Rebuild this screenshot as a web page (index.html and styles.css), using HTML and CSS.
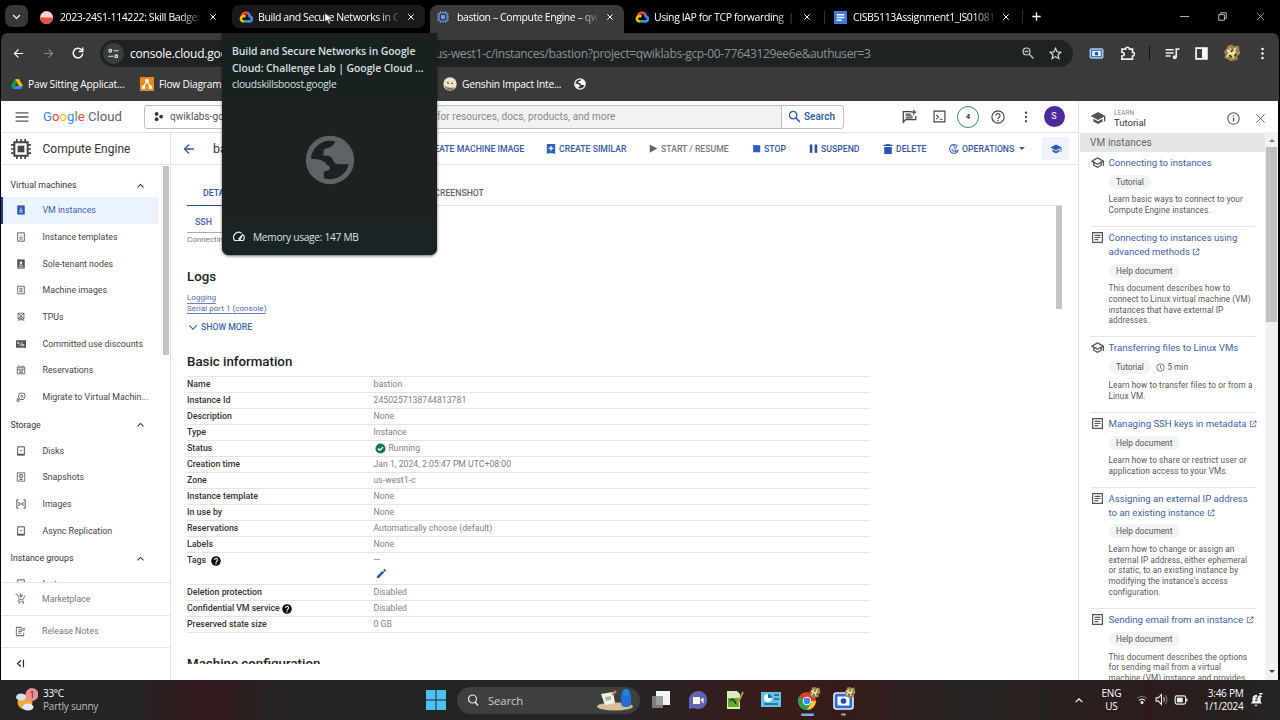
FILE: index.html
```html
<!DOCTYPE html>
<html lang="en">
<head>
<meta charset="utf-8">
<title>bastion – Compute Engine</title>
<link rel="stylesheet" href="styles.css">
</head>
<body>
<svg class="defs" aria-hidden="true">
  <symbol id="x" viewBox="0 0 24 24"><path d="M4 4l16 16M20 4L4 20" fill="none" stroke="currentColor" stroke-width="3"/></symbol>
  <symbol id="xthin" viewBox="0 0 24 24"><path d="M3 3l18 18M21 3L3 21" fill="none" stroke="currentColor" stroke-width="2"/></symbol>
  <symbol id="gcloud" viewBox="0 0 24 24"><g fill="none" stroke-width="4.6"><path d="M5 10a7 7 0 0 1 12-3" stroke="#ea4335"/><path d="M16 6a7 7 0 0 1 2.500 5a4.300 4.300 0 0 1 0 8.500H12" stroke="#4285f4"/><path d="M13 19.500H7" stroke="#34a853"/><path d="M8 19.500a4.600 4.600 0 1 1 3-8" stroke="#fbbc04"/></g></symbol>
  <symbol id="chip" viewBox="0 0 24 24"><path d="M4 4h16v16H4z" fill="none" stroke="currentColor" stroke-width="2.400"/><path d="M8 8h8v8H8z" fill="currentColor"/><path d="M7 0v4M12 0v4M17 0v4M7 20v4M12 20v4M17 20v4M0 7h4M0 12h4M0 17h4M20 7h4M20 12h4M20 17h4" stroke="currentColor" stroke-width="2"/></symbol>
  <symbol id="up" viewBox="0 0 24 24"><path d="M4 17l8-8 8 8" fill="none" stroke="currentColor" stroke-width="2.800"/></symbol>
  <symbol id="down" viewBox="0 0 24 24"><path d="M3 8l9 9 9-9" fill="none" stroke="currentColor" stroke-width="3"/></symbol>
  <symbol id="back" viewBox="0 0 24 24"><path d="M22 12H3M12 3l-9 9 9 9" fill="none" stroke="currentColor" stroke-width="2.600"/></symbol>
  <symbol id="fwd" viewBox="0 0 24 24"><path d="M2 12h19M12 3l9 9-9 9" fill="none" stroke="currentColor" stroke-width="2.400"/></symbol>
  <symbol id="globe" viewBox="0 0 24 24"><circle cx="12" cy="12" r="10.400" fill="none" stroke="currentColor" stroke-width="2.400"/><path d="M15 1.800c-1 3-2 4.200-4.500 4.500C8.500 6.500 9 8 8.800 9.800c1.500.4 3.400-.2 4.200 1.400.6 1.600 1.300 2.800 3.200 2.800H21.500l1-3L21 6l-3-3zM2 11.500c3 0 6-.2 8 2 .5 1.200 2 1 2 2.500 0 1.600-3 .8-3 2.200V22l-3-1-3-4z" fill="currentColor"/></symbol>
  <symbol id="doc" viewBox="0 0 24 24"><path d="M3 3h18v18H3zM6.500 8h11M6.500 12h11M6.500 16h7" fill="none" stroke="currentColor" stroke-width="2.200"/></symbol>
  <symbol id="cap" viewBox="0 0 24 24"><path d="M12 3.500L23 9.500v9M12 3.500L1.500 9.500 12 15.500l10.500-6M5 12v5l7 4 7-4v-5" fill="none" stroke="currentColor" stroke-width="2.300"/></symbol>
  <symbol id="capfill" viewBox="0 0 24 24"><path d="M5 13.200v4L12 21l7-3.800v-4L12 17zM12 3L1 9l11 6 9-4.900V17h2V9z" fill="currentColor"/></symbol>
  <symbol id="ext" viewBox="0 0 24 24"><path d="M10 4H4v16h16v-6M14 3h7v7M21 3L10 14" fill="none" stroke="currentColor" stroke-width="2.400"/></symbol>
  <symbol id="vm" viewBox="0 0 24 24"><path d="M4 2h16v20H4z" fill="none" stroke="currentColor" stroke-width="2.200"/><path d="M9 8h2M13 8h2M8 13h8M8 17h8" stroke="currentColor" stroke-width="2"/></symbol>
  <symbol id="tenant" viewBox="0 0 24 24"><path d="M3 1h18v22H3z" fill="currentColor"/><circle cx="12" cy="9" r="3" fill="#fff"/><path d="M7 16q5-5 10 0M6 19.500h12" fill="none" stroke="#fff" stroke-width="1.800"/></symbol>
  <symbol id="vmfill" viewBox="0 0 24 24"><path d="M3 1h18v22H3z" fill="currentColor"/><path d="M8 17h8M8 12.500h8M12 6v5" stroke="#fff" stroke-width="2"/></symbol>
  <symbol id="disk" viewBox="0 0 24 24"><path d="M4 2h16v20H4z" fill="none" stroke="currentColor" stroke-width="2.400"/><circle cx="12" cy="11" r="2" fill="currentColor"/><path d="M5 20h14" stroke="currentColor" stroke-width="3"/></symbol>
  <symbol id="snap" viewBox="0 0 24 24"><path d="M3 2h18v20H3z" fill="none" stroke="currentColor" stroke-width="2"/><circle cx="12" cy="10" r="4.500" fill="none" stroke="currentColor" stroke-width="2"/><path d="M8 18h8M12 7v6" stroke="currentColor" stroke-width="2"/></symbol>
  <symbol id="machine" viewBox="0 0 24 24"><path d="M4 3h16v18H4z" fill="none" stroke="currentColor" stroke-width="2"/><path d="M8 8h8M8 12h8M8 16h8" stroke="currentColor" stroke-width="2"/></symbol>
  <symbol id="tpu" viewBox="0 0 24 24"><path d="M5 3h14v14H5zM5 3l14 14M19 3L5 17M9 17l-5 5M15 17l5 5M12 9v12" fill="none" stroke="currentColor" stroke-width="2"/></symbol>
  <symbol id="percent" viewBox="0 0 24 24"><path d="M0 3h24v18H0z" fill="currentColor"/><path d="M8 17l7-10M4 8h3v3H4zM14 13h5v3h-5z" fill="none" stroke="#fff" stroke-width="1.600"/></symbol>
  <symbol id="cal" viewBox="0 0 24 24"><path d="M3 5h18v16H3zM3 10h18M7 1v5M17 1v5M12 3v4M7 14h10M7 17.500h10" fill="none" stroke="currentColor" stroke-width="2"/></symbol>
  <symbol id="migrate" viewBox="0 0 24 24"><path d="M8 3h12l2 7-4 8H9l-3-6zM2 22l6-6M3 15v7h7" fill="none" stroke="currentColor" stroke-width="2"/><circle cx="14" cy="10.500" r="2.500" fill="none" stroke="currentColor" stroke-width="2"/></symbol>
  <symbol id="images" viewBox="0 0 24 24"><path d="M6 2H2v20h4M18 2h4v20h-4M6 12h12M7 7v3M17 7v3M7 14v3M17 14v3" fill="none" stroke="currentColor" stroke-width="2.400"/></symbol>
  <symbol id="cart" viewBox="0 0 24 24"><path d="M1 3h4l4 11h9l4-9M9 14l-2 4h13M12 1v9M8 6h9M15 3v7" fill="none" stroke="currentColor" stroke-width="2"/><circle cx="9" cy="21.500" r="2" fill="currentColor"/><circle cx="18" cy="21.500" r="2" fill="currentColor"/></symbol>
  <symbol id="notes" viewBox="0 0 24 24"><path d="M14 3H3v18h16v-6M7 8h6M7 12h8M7 16h6M15 3v6h6M18 4l4 3" fill="none" stroke="currentColor" stroke-width="2.200"/></symbol>
  <symbol id="help" viewBox="0 0 24 24"><circle cx="12" cy="12" r="11.500" fill="#111"/><path d="M8.300 9.500a3.700 3.700 0 1 1 5.700 3c-1.500 1-2 1.500-2 3M12 17v3" fill="none" stroke="#fff" stroke-width="2.500"/></symbol>
  <symbol id="search" viewBox="0 0 24 24"><circle cx="9.500" cy="9.500" r="6.800" fill="none" stroke="currentColor" stroke-width="2.400"/><path d="M14.500 14.500l7.500 7.500" stroke="currentColor" stroke-width="2.800"/></symbol>
  <symbol id="dots" viewBox="0 0 24 24"><g fill="currentColor"><circle cx="12" cy="3.500" r="2.300"/><circle cx="12" cy="12" r="2.300"/><circle cx="12" cy="20.500" r="2.300"/></g></symbol>
  <symbol id="bloom" viewBox="0 0 24 24"><path d="M12 1l4 2 5-1 1 6 1 5-4 3 1 5-6 1-4 1-4-3-4-1 1-5-2-4 4-3 1-5z" fill="#9b8447"/><path d="M8 4l4 4 6-4-2 6 5 3-7 1 1 6-5-4-6 2 3-6-3-5 5 1z" fill="#eee0aa"/><path d="M10 10l4-2M8 15l4 2M16 16l2-4" stroke="#3f3415" stroke-width="2"/></symbol>
</svg>

<header class="tabs">
  <span class="tablist"><svg class="i9"><use href="#down"/></svg></span>
  <div class="tab t1">
    <svg class="i13" viewBox="0 0 24 24"><circle cx="12" cy="12" r="12" fill="#f5d5cc"/><path d="M0 12a12 12 0 0 0 24 0z" fill="#e2523e"/></svg>
    <span class="tt">2023-24S1-114222: Skill Badge:</span><svg class="i8"><use href="#x"/></svg>
  </div>
  <div class="tab t2"><svg class="i14"><use href="#gcloud"/></svg><span class="tt">Build and Secure Networks in G</span><svg class="i8"><use href="#x"/></svg></div>
  <div class="tab t3"><svg class="i12 blue"><use href="#chip"/></svg><span class="tt">bastion – Compute Engine – qwi</span><svg class="i8"><use href="#x"/></svg></div>
  <div class="tab t4"><svg class="i14"><use href="#gcloud"/></svg><span class="tt">Using IAP for TCP forwarding &nbsp;|</span><svg class="i8"><use href="#x"/></svg></div>
  <div class="tab t5"><svg class="i13" viewBox="0 0 24 24"><path d="M0 0h24v24H0z" fill="#3e78dc"/><path d="M5 7h14M5 12h14M5 17h9" stroke="#fff" stroke-width="2.500"/></svg><span class="tt">CISB5113Assignment1_IS01081</span><svg class="i8"><use href="#x"/></svg></div>
  <div class="newtab"><svg class="i9" viewBox="0 0 24 24"><path d="M12 1v22M1 12h22" stroke="#fff" stroke-width="3.500"/></svg></div>
  <div class="winctl">
    <svg class="i9" viewBox="0 0 24 24"><path d="M0 12h24" stroke="#bbb" stroke-width="2.500"/></svg>
    <svg class="i9" viewBox="0 0 24 24"><path d="M2 7h15v15H2zM7 7V2h15v15h-5" fill="none" stroke="#ccc" stroke-width="2.500"/></svg>
    <svg class="i9"><use href="#xthin"/></svg>
  </div>
</header>

<section class="chrome">
  <div class="navrow">
    <svg class="i11"><use href="#back"/></svg>
    <svg class="i11 dim"><use href="#fwd"/></svg>
    <svg class="i12" viewBox="0 0 24 24"><path d="M20 7a9.500 9.500 0 1 0 1.500 6M21.500 1v8h-8" fill="none" stroke="currentColor" stroke-width="3"/></svg>
    <div class="url">
      <span class="site"><svg class="i11" viewBox="0 0 24 24"><path d="M12 6h11M1 18h11" stroke="#eee" stroke-width="2.600"/><circle cx="5" cy="6" r="3" fill="none" stroke="#eee" stroke-width="2.400"/><circle cx="18" cy="18" r="3" fill="none" stroke="#eee" stroke-width="2.400"/></svg></span>
      <span class="u1">console.cloud.goo</span>
      <span class="u2">us-west1-c/instances/bastion?project=qwiklabs-gcp-00-77643129ee6e&amp;authuser=3</span>
      <svg class="i12" viewBox="0 0 24 24"><circle cx="9" cy="9" r="7" fill="none" stroke="#ccc" stroke-width="2.400"/><path d="M5.500 9h7M14 14l9 9" stroke="#ccc" stroke-width="2.600"/></svg>
      <svg class="i13" viewBox="0 0 24 24"><path d="M12 2.500l3 6.500 7 .7-5.300 4.700 1.600 7L12 17.700l-6.300 3.700 1.600-7L2 9.700 9 9z" fill="none" stroke="#ddd" stroke-width="2.200"/></svg>
    </div>
    <div class="exts">
      <svg viewBox="0 0 28 24" width="15" height="13"><rect x="1" y="2" width="26" height="20" rx="4" fill="#a9cdfa"/><rect x="5" y="6" width="18" height="12" fill="#e9f2ff" stroke="#2d63ad" stroke-width="2"/><circle cx="14" cy="12" r="3.500" fill="#24559c"/></svg>
      <svg class="i15" viewBox="0 0 24 24"><path d="M3 5h6c0-4 6-4 6 0h5v5c4 0 4 6 0 6v5H3v-5c5 0 5-6 0-6z" fill="none" stroke="#eee" stroke-width="2.600"/></svg>
      <i class="vr"></i>
      <svg class="i15" viewBox="0 0 24 24"><path d="M1 6h13M1 11h13M1 16h8" stroke="#eee" stroke-width="2.400"/><path d="M18 18V5h5" fill="none" stroke="#eee" stroke-width="2.600"/><circle cx="15.500" cy="18" r="3.300" fill="#eee"/></svg>
      <svg class="i13" viewBox="0 0 24 24"><path d="M2 2h20v20H2z" fill="none" stroke="#fff" stroke-width="3"/><path d="M13 2h9v20h-9z" fill="#fff"/></svg>
      <svg class="i18"><use href="#bloom"/></svg>
      <svg class="i13"><use href="#dots"/></svg>
    </div>
  </div>
  <div class="bookmarks">
    <svg class="i12" viewBox="0 0 24 24"><path d="M8 2h8l8 14h-8z" fill="#fbbc04"/><path d="M8 2l4 7-8 13-4-6z" fill="#0f9d58"/><path d="M8 16h16l-4 6H4z" fill="#4285f4"/></svg>
    <span class="b1">Paw Sitting Applicat...</span>
    <svg class="i14" viewBox="0 0 24 24"><path d="M0 0h24v24H0z" fill="#e6891d"/><path d="M9 4h6v5H9zM3 15h6v5H3zM15 15h6v5h-6z" fill="#fff"/><path d="M12 8l-6 8M12 8l6 8" stroke="#fff" stroke-width="2"/></svg>
    <span class="b2">Flow Diagram_</span>
    <svg class="i14" viewBox="0 0 24 24"><circle cx="12" cy="12" r="11.500" fill="#eee2d1"/><path d="M2 14q8 7 18 3-2 6-8 6T2 14" fill="#92755b"/><path d="M7 9l3 2M14 11h3" stroke="#5b4030" stroke-width="2"/></svg>
    <span class="b3">Genshin Impact Inte...</span>
    <svg class="i12"><use href="#globe"/></svg>
  </div>
</section>

<main class="page">
  <div class="console">
    <div class="gbar">
      <svg class="i14" viewBox="0 0 24 24"><path d="M1 5h22M1 12h22M1 19h22" stroke="#555" stroke-width="2.400"/></svg>
      <span class="logo"><b class="gb">G</b><b class="gr">o</b><b class="gy">o</b><b class="gb">g</b><b class="gg">l</b><b class="gr">e</b> Cloud</span>
      <div class="searchbox">
        <div class="proj"><svg class="i9" viewBox="0 0 24 24"><g fill="#333"><circle cx="7" cy="5" r="5"/><circle cx="7" cy="19" r="5"/><circle cx="19" cy="12" r="5"/></g></svg>qwiklabs-gcp</div>
        <div class="query">for resources, docs, products, and more</div>
        <div class="sbtn"><svg class="i13"><use href="#search"/></svg>Search</div>
      </div>
      <div class="gicons">
        <svg class="i15" viewBox="0 0 24 24"><path d="M15 4H2v17l4-4h16v-6M6 8h8M6 11h11M6 14h11M19 1v8M15 5h8" fill="none" stroke="#444" stroke-width="2"/></svg>
        <svg class="i13" viewBox="0 0 24 24"><path d="M2 2h20v20H2z" fill="none" stroke="#444" stroke-width="2.200"/><path d="M6 9l4 4-4 4M12 17h6" fill="none" stroke="#444" stroke-width="2"/></svg>
        <span class="four">4</span>
        <svg class="i14" viewBox="0 0 24 24"><circle cx="12" cy="12" r="10.500" fill="none" stroke="#444" stroke-width="2"/><path d="M8.500 9.500a3.500 3.500 0 1 1 5.500 3c-1.500 1-2 1.500-2 3M12 17v2.500" fill="none" stroke="#444" stroke-width="2"/></svg>
        <svg class="i12 grey"><use href="#dots"/></svg>
        <span class="ava">S</span>
      </div>
    </div>
    <div class="body">
      <aside class="side">
        <div class="prod"><svg class="i20"><use href="#chip"/></svg><span>Compute Engine</span></div>
        <div class="navwrap">
          <nav>
            <div class="grp first"><span>Virtual machines</span><svg class="i9"><use href="#up"/></svg></div>
            <div class="it on"><svg class="i10"><use href="#vmfill"/></svg>VM instances</div>
            <div class="it"><svg class="i10"><use href="#vm"/></svg>Instance templates</div>
            <div class="it"><svg class="i10"><use href="#tenant"/></svg>Sole-tenant nodes</div>
            <div class="it"><svg class="i10"><use href="#machine"/></svg>Machine images</div>
            <div class="it"><svg class="i10"><use href="#tpu"/></svg>TPUs</div>
            <div class="it"><svg class="i10"><use href="#percent"/></svg>Committed use discounts</div>
            <div class="it"><svg class="i10"><use href="#cal"/></svg>Reservations</div>
            <div class="it"><svg class="i10"><use href="#migrate"/></svg>Migrate to Virtual Machin...</div>
            <div class="grp"><span>Storage</span><svg class="i9"><use href="#up"/></svg></div>
            <div class="it"><svg class="i10"><use href="#disk"/></svg>Disks</div>
            <div class="it"><svg class="i10"><use href="#snap"/></svg>Snapshots</div>
            <div class="it"><svg class="i10"><use href="#images"/></svg>Images</div>
            <div class="it"><svg class="i10"><use href="#disk"/></svg>Async Replication</div>
            <div class="grp"><span>Instance groups</span><svg class="i9"><use href="#up"/></svg></div>
            <div class="it"><svg class="i10"><use href="#vm"/></svg>Instance groups</div>
          </nav>
          <i class="thumb"></i>
        </div>
        <div class="foot"><svg class="i11"><use href="#cart"/></svg>Marketplace</div>
        <div class="foot"><svg class="i11"><use href="#notes"/></svg>Release Notes</div>
        <div class="foot last"><svg class="i9" viewBox="0 0 24 24"><path d="M13 4l-9 8 9 8M20 2v20" fill="none" stroke="#222" stroke-width="3"/></svg></div>
      </aside>
      <section class="content">
        <div class="actions">
          <svg class="i12 a0"><use href="#back"/></svg>
          <span class="ttl">bastion</span>
          <span class="act a1">CREATE MACHINE IMAGE</span>
          <span class="act"><svg class="i10" viewBox="0 0 24 24"><path d="M2 0h20v24l-4-2H6l-4 2z" fill="#2b5fc0"/><path d="M12 5v11M6.500 10.500h11" stroke="#fff" stroke-width="3"/></svg>CREATE SIMILAR</span>
          <span class="act off"><svg class="i9" viewBox="0 0 24 24"><path d="M2 1l20 11L2 23z" fill="#666"/></svg>START / RESUME</span>
          <span class="act"><svg class="i9" viewBox="0 0 24 24"><path d="M3 3h19v19H3z" fill="#2b5fc0"/></svg>STOP</span>
          <span class="act"><svg class="i9" viewBox="0 0 24 24"><path d="M2 1h7v22H2zM15 1h7v22h-7z" fill="#2b4fa0"/></svg>SUSPEND</span>
          <span class="act"><svg class="i10" viewBox="0 0 24 24"><path d="M3 7h18v17H3zM1 2h6l2-2h6l2 2h6v3H1z" fill="#2450b8"/></svg>DELETE</span>
          <span class="act"><svg class="i10" viewBox="0 0 24 24"><path d="M20 5A10.500 10.500 0 1 0 22 15M12 12l8-7M7 12a5 5 0 0 0 9 3h7M12 2v5M18 21l-3-5" fill="none" stroke="#4a6fbf" stroke-width="2.800"/></svg>OPERATIONS</span>
          <i class="caret"></i>
          <span class="learn"><svg class="i12"><use href="#capfill"/></svg></span>
        </div>
        <div class="ctabs"><span class="ct on">DETAILS</span><span class="ct">SCREENSHOT</span></div>
        <div class="scroller">
          <div class="detail">
            <div class="ssh">SSH</div>
            <div class="conn">Connecting</div>
            <h2 class="h-logs">Logs</h2>
            <div class="links"><a>Logging</a><a>Serial port 1 (console)</a></div>
            <div class="more"><svg class="i10"><use href="#down"/></svg>SHOW MORE</div>
            <h2 class="h-basic">Basic information</h2>
            <dl>
              <div><dt>Name</dt><dd>bastion</dd></div>
              <div><dt>Instance Id</dt><dd>2450257138744813781</dd></div>
              <div><dt>Description</dt><dd>None</dd></div>
              <div><dt>Type</dt><dd>Instance</dd></div>
              <div><dt>Status</dt><dd class="run"><svg class="i11" viewBox="0 0 24 24"><circle cx="12" cy="12" r="11" fill="#137a43"/><path d="M6.500 12l4 4 7-7" fill="none" stroke="#fff" stroke-width="3"/></svg>Running</dd></div>
              <div><dt>Creation time</dt><dd>Jan 1, 2024, 2:05:47 PM UTC+08:00</dd></div>
              <div><dt>Zone</dt><dd>us-west1-c</dd></div>
              <div><dt>Instance template</dt><dd>None</dd></div>
              <div><dt>In use by</dt><dd>None</dd></div>
              <div><dt>Reservations</dt><dd>Automatically choose (default)</dd></div>
              <div><dt>Labels</dt><dd>None</dd></div>
              <div class="tall"><dt class="tags">Tags <svg class="i10"><use href="#help"/></svg></dt><dd>—<svg class="pen" viewBox="0 0 24 24"><path d="M2 18v4h4L18 10l-4-4zM15.500 4.500l4 4L22.500 5.500l-4-4z" fill="#2c5cb5"/></svg></dd></div>
              <div><dt>Deletion protection</dt><dd>Disabled</dd></div>
              <div><dt class="conf">Confidential VM service <svg class="i10"><use href="#help"/></svg></dt><dd>Disabled</dd></div>
              <div><dt>Preserved state size</dt><dd>0 GB</dd></div>
            </dl>
            <h2 class="h-mach">Machine configuration</h2>
          </div>
          <i class="cthumb"></i>
        </div>
      </section>
    </div>
  </div>

  <aside class="tut">
    <div class="thead">
      <svg class="i16"><use href="#capfill"/></svg>
      <div class="tname"><small>LEARN</small><span>Tutorial</span></div>
      <svg class="i13" viewBox="0 0 24 24"><circle cx="12" cy="12" r="10.500" fill="none" stroke="#555" stroke-width="2"/><path d="M12 10.500v7M12 6v2.500" stroke="#555" stroke-width="2.400"/></svg>
      <svg class="i11"><use href="#xthin"/></svg>
    </div>
    <div class="tbody">
      <div class="tlist">
        <div class="tsec">VM instances</div>
        <article><svg class="i13"><use href="#cap"/></svg><div><h3>Connecting to instances</h3><span class="pill">Tutorial</span><p>Learn basic ways to connect to your<br>Compute Engine instances.</p></div></article>
        <article><svg class="i13"><use href="#doc"/></svg><div><h3>Connecting to instances using<br>advanced methods <svg class="i8"><use href="#ext"/></svg></h3><span class="pill">Help document</span><p>This document describes how to<br>connect to Linux virtual machine (VM)<br>instances that have external IP<br>addresses.</p></div></article>
        <article><svg class="i13"><use href="#cap"/></svg><div><h3>Transferring files to Linux VMs</h3><span class="pill">Tutorial</span><span class="mins"><svg class="i9" viewBox="0 0 24 24"><circle cx="12" cy="12" r="10" fill="none" stroke="currentColor" stroke-width="2.200"/><path d="M12 6v7l4 3" fill="none" stroke="currentColor" stroke-width="2.200"/></svg>5 min</span><p>Learn how to transfer files to or from a<br>Linux VM.</p></div></article>
        <article><svg class="i13"><use href="#doc"/></svg><div><h3>Managing SSH keys in metadata <svg class="i8"><use href="#ext"/></svg></h3><span class="pill">Help document</span><p>Learn how to share or restrict user or<br>application access to your VMs.</p></div></article>
        <article><svg class="i13"><use href="#doc"/></svg><div><h3>Assigning an external IP address<br>to an existing instance <svg class="i8"><use href="#ext"/></svg></h3><span class="pill">Help document</span><p>Learn how to change or assign an<br>external IP address, either ephemeral<br>or static, to an existing instance by<br>modifying the instance's access<br>configuration.</p></div></article>
        <article><svg class="i13"><use href="#doc"/></svg><div><h3>Sending email from an instance <svg class="i8"><use href="#ext"/></svg></h3><span class="pill">Help document</span><p>This document describes the options<br>for sending mail from a virtual<br>machine (VM) instance and provides</p></div></article>
      </div>
      <div class="tbar"><i class="au"></i><i class="tthumb"></i><i class="ad"></i></div>
    </div>
  </aside>
</main>

<footer class="task">
  <div class="weather">
    <svg width="22" height="26" viewBox="0 0 22 26"><circle cx="9" cy="15" r="7.500" fill="#f2a73b"/><ellipse cx="5" cy="10" rx="5" ry="3.500" fill="#cfe2f3"/><ellipse cx="12" cy="20" rx="5.500" ry="3.500" fill="#dfeaf5"/><circle cx="16" cy="7.500" r="6.500" fill="#f08c94"/><text x="13.500" y="11" font-size="9" fill="#222">1</text></svg>
    <div><span>33°C</span><span class="ps">Partly sunny</span></div>
  </div>
  <svg class="win" viewBox="0 0 20 20"><path d="M0 0h9.500v9.500H0zM10.500 0H20v9.500h-9.500zM0 10.500h9.500V20H0zM10.500 10.500H20V20h-9.500z" fill="#4cc2f3"/></svg>
  <div class="tsearch"><svg class="i12" viewBox="0 0 24 24"><circle cx="11" cy="10" r="8" fill="none" stroke="#eee" stroke-width="2.400"/><path d="M16 16l6 7" stroke="#eee" stroke-width="2.600"/></svg><span>Search</span>
    <svg width="38" height="22" viewBox="0 0 38 22"><ellipse cx="19" cy="17.500" rx="18" ry="4" fill="#d9bf93"/><path d="M5 5l12-2 2 11-10 2z" fill="#f3f1e4"/><path d="M9 8l6-1v4l-5 1z" fill="#9cbf9a"/><path d="M16 6l4-4" stroke="#e07b3c" stroke-width="2"/><rect x="25" y="3" width="10" height="15" rx="4" fill="#1f6fd6"/><circle cx="30" cy="3.500" r="3.500" fill="#1a86e8"/></svg></div>
  <div class="apps">
    <svg viewBox="0 0 20 20"><path d="M5 1h14v14H5z" fill="#f4f4f4"/><path d="M1 6h11v12H1z" fill="#8d8d8d" opacity=".85"/></svg>
    <svg viewBox="0 0 20 20"><path d="M10 1a9 9 0 1 1-4 17l-5 1V10a9 9 0 0 1 9-9z" fill="#6264b5"/><path d="M5 7h7v7H5zM12.500 10l3-2.500v6z" fill="#fff"/></svg>
    <svg viewBox="0 0 20 20"><path d="M3 1h10l3 3v15H3z" fill="#d8ecc0"/><path d="M4 8h11v9H4z" fill="#5fae2e"/><path d="M6 11q3-4 5 1t4-1" stroke="#1d3b12" stroke-width="1.500" fill="none"/><path d="M19 2l-6 13" stroke="#b5a13a" stroke-width="1.800"/></svg>
    <svg viewBox="0 0 20 20"><path d="M0 2h20v15H0z" fill="#68c0e8"/><circle cx="7" cy="8" r="4" fill="#eef8fd"/><path d="M7 8V4a4 4 0 0 1 4 4z" fill="#1e6fa8"/><path d="M13 5h5M13 9h5M3 14h14" stroke="#17618f" stroke-width="1.500"/></svg>
    <svg viewBox="0 0 20 20"><circle cx="9" cy="11" r="9" fill="#e33b2e"/><path d="M9 11L1.200 6.500A9 9 0 0 0 9 20l4-6.500z" fill="#2ba24c"/><path d="M9 11h9a9 9 0 0 1-9 9l4-7z" fill="#fcc934"/><circle cx="9" cy="11" r="4.300" fill="#fff"/><circle cx="9" cy="11" r="3.300" fill="#4285f4"/><svg x="11" y="-3.500" width="12" height="12"><use href="#bloom"/></svg><rect x="3" y="23.500" width="13" height="2.500" rx="1.200" fill="#63b8e8"/></svg>
    <svg viewBox="0 0 20 20"><rect x="0" y="3" width="19" height="16" rx="2.500" fill="#2c6bd8" stroke="#e8f0fc" stroke-width="1.600"/><path d="M3.500 6.500h12v9h-12z" fill="#fff"/><circle cx="9.500" cy="11" r="2.800" fill="#1c4fa8"/><svg x="10" y="-3.500" width="12" height="12"><use href="#bloom"/></svg><rect x="7" y="23.500" width="5" height="2" rx="1" fill="#aaa"/></svg>
  </div>
  <svg class="i10 tray-up"><use href="#up"/></svg>
  <div class="lang">ENG<br>US</div>
  <div class="sys">
    <svg class="i12" viewBox="0 0 24 24"><path d="M2 11a14 14 0 0 1 20 0" stroke="#777" stroke-width="2" fill="none"/><path d="M6 15a9 9 0 0 1 12 0" stroke="#ddd" stroke-width="2.400" fill="none"/><circle cx="12" cy="19" r="3" fill="#eee"/></svg>
    <svg class="i13" viewBox="0 0 24 24"><path d="M2 9h4l6-6v18l-6-6H2zM16 8q3 4 0 8" fill="none" stroke="#eee" stroke-width="2"/><path d="M19 4q6 8 0 16" fill="none" stroke="#777" stroke-width="2"/></svg>
    <svg class="i14" viewBox="0 0 24 24"><rect x="2" y="5" width="18" height="14" rx="3" fill="none" stroke="#eee" stroke-width="2"/><path d="M5 8h10v8H5z" fill="#eee"/><path d="M22 10v4" stroke="#eee" stroke-width="2.400"/></svg>
  </div>
  <div class="clock">3:46 PM<br>1/1/2024</div>
  <svg class="i14 bell" viewBox="0 0 24 24"><path d="M3 18l3-4V9q0-5 6-6h2v4h6v7l2 4zM9 20h6l-3 3z" fill="#eee"/><path d="M11 8h4l-4 5h4" fill="none" stroke="#333" stroke-width="1.500"/><path d="M17 1h5l-5 5h5" fill="none" stroke="#eee" stroke-width="1.800"/></svg>
</footer>

<div class="card">
  <div class="chead"><strong>Build and Secure Networks in Google<br>Cloud: Challenge Lab | Google Cloud ...</strong><span class="dom">cloudskillsboost.google</span></div>
  <div class="cimg"><svg width="50" height="50"><use href="#globe"/></svg></div>
  <div class="cmem"><svg class="i12" viewBox="0 0 24 24"><path d="M17 4.500A10 10 0 0 0 3.500 19h17A10 10 0 0 0 21 8" fill="none" stroke="#eee" stroke-width="2.400"/><path d="M11 16L20 6l-6 12z" fill="#eee" stroke="#eee" stroke-width="2"/></svg>Memory usage: 147 MB</div>
</div>
<svg class="cursor" viewBox="0 0 12 18"><path d="M1 1v13l3-3 2.500 5.500 2-1L6.200 10.500H11z" fill="#fff" stroke="#111" stroke-width=".8"/></svg>
</body>
</html>
```
FILE: styles.css
```css
* { box-sizing: border-box; }
body { margin: 0; width: 1280px; height: 720px; overflow: hidden; background: #000; color: #222; font-family: Roboto, sans-serif; position: relative; display: flex; flex-direction: column; }
svg { flex: none; display: block; }
.defs { position: absolute; width: 0; height: 0; }
.i8 { width: 8px; height: 8px; } .i9 { width: 9px; height: 9px; } .i10 { width: 10px; height: 10px; }
.i11 { width: 11px; height: 11px; } .i12 { width: 12px; height: 12px; } .i13 { width: 13px; height: 13px; }
.i14 { width: 14px; height: 14px; } .i15 { width: 15px; height: 15px; } .i16 { width: 16px; height: 16px; }
.i18 { width: 18px; height: 18px; } .i20 { width: 20px; height: 20px; }
.blue { color: #6d93ea; } .grey { color: #444; }

.tabs { height: 33px; flex: none; display: grid; grid-template-columns: 33px 192px 202px 198px 199px 198px 150px 1fr; color: #fff; font: 10.500px/28px "Open Sans", sans-serif; letter-spacing: -.4px; background: #000; align-items: end; }
.tablist { width: 23px; height: 22px; margin: 0 0 6px 5px; border-radius: 7px; background: #383838; display: grid; place-items: center; }
.tab { height: 28px; display: flex; align-items: center; padding-left: 7px; white-space: nowrap; margin-bottom: 2px; }
.tab .tt { width: 140px; margin-left: 5px; overflow: hidden; -webkit-mask-image: linear-gradient(90deg, #000 86%, #0003); mask-image: linear-gradient(90deg, #000 86%, #0003); }
.tab > svg:last-child { margin-left: 9px; }
.t1 .tt { margin-left: 7px; }
.t2 { height: 23px; margin: 0 3px 5px 7px; background: #1a1a1a; border-radius: 7px; width: 193px; }
.t3 { background: #3a3a3a; border-radius: 8px 8px 0 0; margin: 0 0 0 3px; padding-bottom: 4px; width: 194px; }
.t3 .tt { margin-left: 8px; }
.t4 { padding-left: 10px; }
.t5 { padding-left: 10px; background: linear-gradient(#333, #333) 0 50%/1px 13px no-repeat; }
.t5 .tt { margin-left: 6px; }
.newtab { height: 33px; padding: 12px 0 0 10px; background: linear-gradient(#333, #333) 0 50%/1px 13px no-repeat; }
.winctl { display: flex; gap: 29px; justify-content: flex-end; padding: 0 15px 12px 0; color: #ccc; }

.chrome { height: 68px; flex: none; margin: 0 1px; background: #3a3a3a; border-radius: 7px 7px 0 0; color: #fff; font-family: "Open Sans", sans-serif; padding-top: 6px; }
.navrow { height: 28px; display: flex; align-items: center; padding-left: 12px; }
.navrow > svg { margin-right: 19px; } .navrow > svg:nth-child(3) { margin-right: 16px; margin-left: -1px; }
.dim { color: #888; }
.url { width: 973px; height: 27px; border-radius: 14px; background: #1f2222; display: flex; align-items: center; padding-left: 3px; font-size: 12px; letter-spacing: -.35px; white-space: nowrap; }
.site { width: 21px; height: 21px; border-radius: 50%; background: #3a3d3d; display: grid; place-items: center; }
.u1 { width: 305px; margin-left: 6px; letter-spacing: -.2px; }
.u2 { width: 580px; color: #8d9292; }
.url > svg { margin-left: 7px; } .url > svg:last-child { margin-left: 15px; }
.exts { display: flex; align-items: center; gap: 15px; margin-left: 16px; }
.exts svg:nth-child(2) { margin-left: 1px; }
.vr { width: 1px; height: 14px; background: #111; margin-left: -1px; }
.bookmarks { height: 34px; display: flex; align-items: center; padding-left: 10px; font-size: 10.200px; letter-spacing: -.2px; white-space: nowrap; }
.bookmarks span { margin-left: 5px; } .b1 { width: 112px; } .b2 { width: 284px; } .b3 { width: 112px; }

.page { height: 579px; flex: none; margin: 0 2px 0 1px; background: #fff; display: flex; overflow: hidden; }
.console { width: 1078px; display: flex; flex-direction: column; border-right: 1px solid #e4e6e6; }
.gbar { height: 32px; flex: none; border-bottom: 1px solid #e3e5e5; display: flex; align-items: center; padding-left: 14px; }
.logo { font-size: 13.200px; color: #5f6368; width: 87px; margin-left: 14px; white-space: nowrap; }
.logo b { font-weight: 400; } .logo .gb { color: #4285f4; } .gr { color: #ea4335; } .gy { color: #fbbc04; } .gg { color: #34a853; }
.searchbox { width: 700px; height: 24px; margin-left: 14px; border: 1px solid #bcbfbf; border-radius: 3px; display: flex; align-items: center; font-size: 10px; color: #555; }
.proj { width: 278px; padding-left: 9px; display: flex; align-items: center; gap: 7px; letter-spacing: .05px; }
.query { width: 359px; height: 22px; line-height: 22px; padding-left: 14px; background: #f1f3f3; color: #858889; letter-spacing: .07px; border-right: 1px solid #bcbfbf; }
.sbtn { color: #2b57a8; padding-left: 6px; display: flex; align-items: center; gap: 3px; font-weight: 500; }
.gicons { display: flex; align-items: center; margin-left: 58px; gap: 15.500px; }
.four { width: 22px; height: 22px; border: 1.500px solid #2b9060; border-radius: 50%; text-align: center; font: 500 8px/19px Roboto, sans-serif; margin: 0 -4px; }
.ava { width: 21px; height: 21px; border-radius: 50%; background: #4b2a9b; color: #fff; font: 9px/21px Roboto, sans-serif; text-align: center; margin-left: -4px; }
.body { flex: 1; display: flex; min-height: 0; }
.side { width: 170px; border-right: 1px solid #e0e2e2; display: flex; flex-direction: column; font-size: 8.800px; }
.prod { height: 32px; flex: none; border-bottom: 1px solid #e3e5e5; display: flex; align-items: center; gap: 11.500px; padding-left: 10px; font-size: 12px; color: #333; }
.prod svg { color: #444; }
.navwrap { height: 417px; flex: none; display: flex; overflow: hidden; justify-content: space-between; padding-right: 1px; }
nav { width: 158px; color: #444; }
.thumb { width: 6px; height: 189px; background: #c2c2c2; margin-top: 1px; }
.grp { height: 27px; display: flex; align-items: center; justify-content: space-between; padding: 2px 14px 0 9.500px; color: #333; }
.grp.first { height: 32px; padding-top: 8px; }
.it { height: 26.670px; display: flex; align-items: center; gap: 16.500px; padding-left: 15px; white-space: nowrap; }
.it svg { color: #555; }
.it.on { background: #edf3fc; color: #3e5fae; box-shadow: inset 2px 0 #1d3f8f; } .it.on svg { color: #2858b8; }
.foot { height: 32.500px; border-top: 1px solid #e3e5e5; display: flex; align-items: center; gap: 16px; padding-left: 14px; color: #777; }
.foot.last { padding-left: 15px; }
.content { flex: 1; min-width: 0; display: flex; flex-direction: column; }
.actions { height: 32px; flex: none; border-bottom: 1px solid #e6e8e8; display: grid; grid-template-columns: 30px 210px 123px 103px 103px 57px 74px 66px 70px 23px 27px; align-items: center; padding-left: 12px; font-size: 8.700px; color: #3458a4; white-space: nowrap; }
.ttl { font-size: 12.500px; color: #333; }
.act { display: flex; gap: 3px; align-items: center; font-weight: 500; }
.act.off { color: #777; }
.caret { border: 3px solid transparent; border-top-color: #3458a4; border-bottom: 0; width: 0; }
.learn { width: 27px; height: 23px; background: #edf4fc; display: grid; place-items: center; color: #2858b8; }
.ctabs { height: 41px; flex: none; margin: 0 16px; border-bottom: 1px solid #dfe1e1; display: flex; align-items: flex-end; font-size: 8.700px; line-height: 24px; color: #666; font-weight: 500; }
.ct { padding-left: 174px; }
.ct.on { width: 68px; color: #3458a4; border-bottom: 1px solid #2848a0; padding-left: 16px; margin-bottom: -1px; }
.scroller { height: 458px; margin-left: 16px; display: flex; justify-content: space-between; overflow: hidden; padding-right: 16px; }
.cthumb { width: 6px; height: 103px; background: #c4c4c4; }
.detail { width: 683px; font-size: 8.800px; color: #777; }
.ssh { height: 27px; width: 200px; border-bottom: 1px solid #aaa; padding: 11px 0 0 8px; font: 500 8.800px/11px Roboto, sans-serif; color: #4464a8; }
.conn { font-size: 8px; line-height: 14px; }
h2 { margin: 0; font-size: 13.300px; font-weight: 500; color: #222; line-height: 18px; white-space: nowrap; }
.h-logs { margin-top: 21px; }
.links { margin-top: 7px; display: flex; flex-direction: column; align-items: flex-start; color: #4969ad; font-size: 8.100px; line-height: 9.500px; }
.links a { border-bottom: 1px solid #6a84bd; }
.more { display: flex; align-items: center; gap: 3px; padding-left: 1px; color: #4464a8; font-weight: 500; font-size: 8.700px; line-height: 12px; margin-top: 7px; }
.h-basic { margin-top: 20px; }
dl { margin: 5px 0 0; border-top: 1px solid #e4e4e4; }
dl > div { height: 16px; display: grid; grid-template-columns: 186.500px 1fr; border-bottom: 1px solid #e4e4e4; line-height: 15px; }
dl > .tall { height: 32px; }
dt { font-weight: 500; color: #333; display: flex; align-items: center; gap: 2px; height: 15px; }
.tags { gap: 5px; }
.conf { letter-spacing: -.05px; }
dd { margin: 0; color: #808080; font-size: 8.700px; }
.run { display: flex; align-items: center; gap: 3px; padding-left: 1px; }
.pen { width: 11px; height: 11px; margin: 0 0 0 2px; }
.h-mach { margin-top: 22px; }

.tut { flex: 1; display: flex; flex-direction: column; margin-left: 1px; }
.thead { height: 31px; flex: none; display: flex; align-items: center; padding: 3px 12px 0 10px; color: #555; }
.tname { width: 113px; margin-left: 8px; display: flex; flex-direction: column; font-size: 9.500px; line-height: 10px; color: #333; }
.tname small { font-size: 6.500px; line-height: 9px; color: #888; }
.thead svg:last-child { margin-left: 15px; }
.tbody { display: flex; height: 548px; overflow: hidden; }
.tlist { width: 185px; }
.tsec { height: 19px; background: #e3e7e7; color: #666; font-size: 10px; line-height: 19px; padding-left: 10px; letter-spacing: .1px; margin-top: 1px; }
article { display: flex; gap: 4.500px; margin: 0 10px 0 11px; padding: 4px 0 10.500px; border-bottom: 1px solid #e3e3e3; color: #555; white-space: nowrap; }
article h3 { margin: 0; font-size: 9.600px; line-height: 13.300px; font-weight: 400; color: #3d61a5; }
h3 svg { display: inline-block; vertical-align: -1px; }
.pill { display: inline-block; height: 14px; margin: 5.600px 0; border-radius: 7px; background: #f2f3f3; padding: 0 7.500px; font-size: 8.300px; line-height: 14px; vertical-align: top; }
.mins { display: inline-flex; align-items: center; gap: 2px; height: 14px; margin: 5.600px 0 0 5px; font-size: 8.300px; vertical-align: top; }
article p { margin: 0; font-size: 8.200px; line-height: 10.700px; letter-spacing: .11px; }
.tbar { flex: 1; background: #f1f1f1; display: flex; flex-direction: column; align-items: center; }
.au, .ad { border: 3px solid transparent; border-bottom-color: #777; border-top: 0; margin: 7px 0 5px; }
.tthumb { width: 11px; height: 175px; background: #c0c0c0; }
.ad { border: 3px solid transparent; border-top-color: #444; border-bottom: 0; margin: auto 0 7px; }

.task { height: 40px; flex: none; display: flex; align-items: center; background: linear-gradient(90deg, #242424 0, #242424 130px, #33191b 200px, #242424 290px, #242424 610px, #3a1c1a 790px, #351b19 830px, #272423 960px, #2b1c1a 1150px, #242323 1280px); color: #fff; font: 10px/13px "Open Sans", sans-serif; letter-spacing: -.1px; }
.weather { width: 415px; padding-left: 16px; display: flex; align-items: center; gap: 5px; }
.weather div { display: flex; flex-direction: column; letter-spacing: -.3px; } .ps { color: #bbb; letter-spacing: -.2px; }
.win { width: 20px; height: 20px; margin-left: 11px; }
.tsearch { width: 183px; height: 27px; border-radius: 14px; background: #3e4040; margin-left: 11px; padding: 0 6px 0 10px; display: flex; align-items: center; font-size: 11.300px; color: #ccc; }
.tsearch span { margin: 0 auto 0 9px; }
.apps { display: flex; gap: 16.700px; margin-left: 11px; }
.apps > svg { width: 20px; height: 20px; overflow: visible; }
.tray-up { margin-left: 220px; }
.lang { text-align: center; margin-left: 12px; width: 30px; }
.sys { display: flex; gap: 6.500px; margin-left: 10px; }
.clock { text-align: right; width: 58px; margin-left: -3px; letter-spacing: -.25px; }
.bell { margin-left: 6px; }

.card { position: absolute; left: 222px; top: 33px; width: 215px; height: 222px; border-radius: 0 0 7px 7px; background: #1d2122; color: #d6e1e1; font-family: "Open Sans", sans-serif; box-shadow: 0 1px 3px #0009; overflow: hidden; }
.chead { height: 67px; background: #192020; padding: 10px 10px 0; font-size: 10.400px; line-height: 17px; white-space: nowrap; }
.chead strong { font-weight: 600; display: block; letter-spacing: -.05px; } .dom { display: block; line-height: 15px; font-size: 10.200px; letter-spacing: -.25px; }
.cimg { height: 119px; display: grid; place-items: center; color: #5e6365; }
.cmem { height: 36px; background: #1a2424; display: flex; align-items: center; gap: 8px; padding-left: 11px; font-size: 10.200px; letter-spacing: -.3px; }
.cursor { position: absolute; left: 324px; top: 12px; width: 9px; height: 13px; }
```
